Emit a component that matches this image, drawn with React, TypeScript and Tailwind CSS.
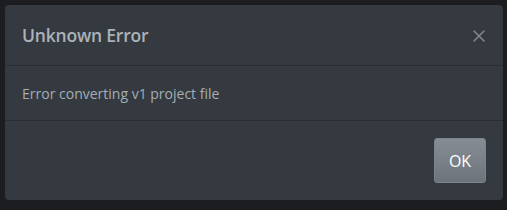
import React from 'react';

const CloseIcon: React.FC = () => (
  <svg width="12" height="12" viewBox="0 0 12 12" fill="none">
    <path d="M1 1L11 11M11 1L1 11" stroke="#83898f" strokeWidth="1.5" strokeLinecap="round" />
  </svg>
);

export default function App() {
  return (
    <div className="w-[507px] h-[210px] bg-[#1b1d21] p-[5px] pr-[4px] pb-[10px] font-['Open_Sans','Noto_Sans',sans-serif]">
      <div className="h-full bg-[#343a40] rounded-[4px] flex flex-col">
        <div className="h-[61px] flex items-center justify-between pl-[17px] pr-[18px] border-b border-[#2a2e33]">
          <h2 className="text-[17.5px] font-semibold text-[#acb2b8] tracking-[-0.2px]">Unknown Error</h2>
          <button type="button" className="w-[12px] h-[12px] flex items-center justify-center mt-[1px]">
            <CloseIcon />
          </button>
        </div>
        <div className="h-[55px] flex items-center pl-[17px] border-b border-[#2a2e33]">
          <p className="text-[14px] text-[#a5adb5]">Error converting v1 project file</p>
        </div>
        <div className="flex-1 flex items-start justify-end pt-[17px] pr-[17px]">
          <button
            type="button"
            className="w-[52px] h-[45px] rounded-[3px] bg-gradient-to-b from-[#878d94] to-[#6e747b] text-white text-[16px] border border-[#7d838a]"
          >
            OK
          </button>
        </div>
      </div>
    </div>
  );
}
